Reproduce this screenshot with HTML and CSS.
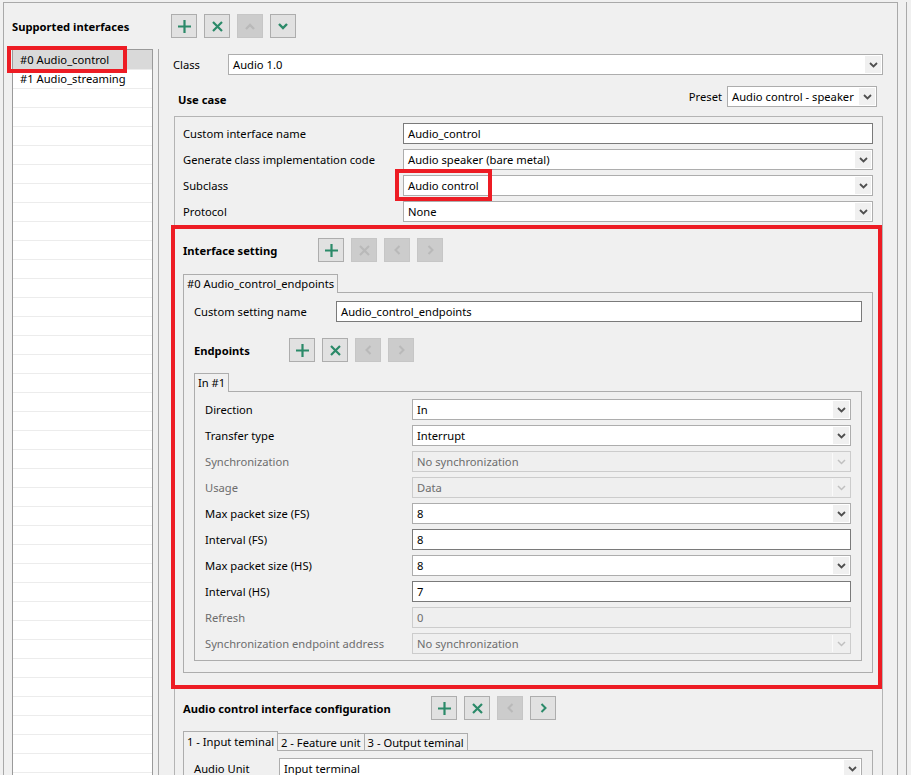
FILE: index.html
```html
<!DOCTYPE html>
<html>
<head>
<meta charset="utf-8">
<link rel="stylesheet" href="styles.css">
</head>
<body>
<div class="app">
  <div class="frame">
    <div class="topbar">
      <div class="title w-top">Supported interfaces</div>
      <div class="btns">
        <div class="btn"><svg width="13" height="13" viewBox="0 0 13 13"><path d="M6.5 0v13M0 6.5h13" stroke="currentColor" stroke-width="2.2"/></svg></div>
        <div class="btn"><svg width="11" height="11" viewBox="0 0 11 11"><path d="M1 1l9 9M10 1l-9 9" stroke="currentColor" stroke-width="2.2"/></svg></div>
        <div class="btn dis"><svg width="10" height="7" viewBox="0 0 10 7"><path d="M1 6l4-4 4 4" stroke="currentColor" stroke-width="2.4" fill="none"/></svg></div>
        <div class="btn"><svg width="10" height="7" viewBox="0 0 10 7"><path d="M1 1l4 4 4-4" stroke="currentColor" stroke-width="2.4" fill="none"/></svg></div>
      </div>
    </div>
    <div class="main">
      <div class="list">
        <div class="item sel">#0 Audio_control</div>
        <div class="item">#1 Audio_streaming</div>
      </div>
      <div class="pane">
        <div class="classrow">
          <div class="lbl-class">Class</div>
          <div class="combo"><span class="val">Audio 1.0</span><span class="arrow"><svg width="9" height="6" viewBox="0 0 9 6"><path d="M1 1l3.5 3.5L8 1" stroke="currentColor" stroke-width="1.8" fill="none"/></svg></span></div>
        </div>
        <div class="usecase-row">
          <div class="title uc-title">Use case</div>
          <div class="preset">
            <span>Preset</span>
            <div class="combo preset-combo"><span class="val">Audio control - speaker</span><span class="arrow"><svg width="9" height="6" viewBox="0 0 9 6"><path d="M1 1l3.5 3.5L8 1" stroke="currentColor" stroke-width="1.8" fill="none"/></svg></span></div>
          </div>
        </div>
        <div class="group">
          <div class="form f-use">
            <div>Custom interface name</div>
            <div class="text"><span class="val">Audio_control</span></div>
            <div>Generate class implementation code</div>
            <div class="combo"><span class="val">Audio speaker (bare metal)</span><span class="arrow"><svg width="9" height="6" viewBox="0 0 9 6"><path d="M1 1l3.5 3.5L8 1" stroke="currentColor" stroke-width="1.8" fill="none"/></svg></span></div>
            <div>Subclass</div>
            <div class="combo"><span class="val">Audio control</span><span class="arrow"><svg width="9" height="6" viewBox="0 0 9 6"><path d="M1 1l3.5 3.5L8 1" stroke="currentColor" stroke-width="1.8" fill="none"/></svg></span></div>
            <div>Protocol</div>
            <div class="combo"><span class="val">None</span><span class="arrow"><svg width="9" height="6" viewBox="0 0 9 6"><path d="M1 1l3.5 3.5L8 1" stroke="currentColor" stroke-width="1.8" fill="none"/></svg></span></div>
          </div>

          <div class="hdr hdr-if">
            <div class="title w-if">Interface setting</div>
            <div class="btns">
              <div class="btn"><svg width="13" height="13" viewBox="0 0 13 13"><path d="M6.5 0v13M0 6.5h13" stroke="currentColor" stroke-width="2.2"/></svg></div>
              <div class="btn dis"><svg width="11" height="11" viewBox="0 0 11 11"><path d="M1 1l9 9M10 1l-9 9" stroke="currentColor" stroke-width="2.2"/></svg></div>
              <div class="btn dis"><svg width="7" height="10" viewBox="0 0 7 10"><path d="M5.5 1l-4 4 4 4" stroke="currentColor" stroke-width="2" fill="none"/></svg></div>
              <div class="btn dis"><svg width="7" height="10" viewBox="0 0 7 10"><path d="M1.5 1l4 4-4 4" stroke="currentColor" stroke-width="2" fill="none"/></svg></div>
            </div>
          </div>
          <div class="tabs tabs-if">
            <div class="tab on">#0 Audio_control_endpoints</div>
          </div>
          <div class="panel panel-if">
            <div class="form f-set">
              <div>Custom setting name</div>
              <div class="text"><span class="val">Audio_control_endpoints</span></div>
            </div>
            <div class="hdr hdr-ep">
              <div class="title w-ep">Endpoints</div>
              <div class="btns">
                <div class="btn"><svg width="13" height="13" viewBox="0 0 13 13"><path d="M6.5 0v13M0 6.5h13" stroke="currentColor" stroke-width="2.2"/></svg></div>
                <div class="btn"><svg width="11" height="11" viewBox="0 0 11 11"><path d="M1 1l9 9M10 1l-9 9" stroke="currentColor" stroke-width="2.2"/></svg></div>
                <div class="btn dis"><svg width="7" height="10" viewBox="0 0 7 10"><path d="M5.5 1l-4 4 4 4" stroke="currentColor" stroke-width="2" fill="none"/></svg></div>
                <div class="btn dis"><svg width="7" height="10" viewBox="0 0 7 10"><path d="M1.5 1l4 4-4 4" stroke="currentColor" stroke-width="2" fill="none"/></svg></div>
              </div>
            </div>
            <div class="tabs tabs-ep">
              <div class="tab on">In #1</div>
            </div>
            <div class="panel panel-ep">
              <div class="form f-ep">
                <div>Direction</div>
                <div class="combo"><span class="val">In</span><span class="arrow"><svg width="9" height="6" viewBox="0 0 9 6"><path d="M1 1l3.5 3.5L8 1" stroke="currentColor" stroke-width="1.8" fill="none"/></svg></span></div>
                <div>Transfer type</div>
                <div class="combo"><span class="val">Interrupt</span><span class="arrow"><svg width="9" height="6" viewBox="0 0 9 6"><path d="M1 1l3.5 3.5L8 1" stroke="currentColor" stroke-width="1.8" fill="none"/></svg></span></div>
                <div class="dlbl">Synchronization</div>
                <div class="combo off"><span class="val">No synchronization</span><span class="arrow"><svg width="9" height="6" viewBox="0 0 9 6"><path d="M1 1l3.5 3.5L8 1" stroke="currentColor" stroke-width="1.5" fill="none"/></svg></span></div>
                <div class="dlbl">Usage</div>
                <div class="combo off"><span class="val">Data</span><span class="arrow"><svg width="9" height="6" viewBox="0 0 9 6"><path d="M1 1l3.5 3.5L8 1" stroke="currentColor" stroke-width="1.5" fill="none"/></svg></span></div>
                <div>Max packet size (FS)</div>
                <div class="combo"><span class="val">8</span><span class="arrow"><svg width="9" height="6" viewBox="0 0 9 6"><path d="M1 1l3.5 3.5L8 1" stroke="currentColor" stroke-width="1.8" fill="none"/></svg></span></div>
                <div>Interval (FS)</div>
                <div class="text"><span class="val">8</span></div>
                <div>Max packet size (HS)</div>
                <div class="combo"><span class="val">8</span><span class="arrow"><svg width="9" height="6" viewBox="0 0 9 6"><path d="M1 1l3.5 3.5L8 1" stroke="currentColor" stroke-width="1.8" fill="none"/></svg></span></div>
                <div>Interval (HS)</div>
                <div class="text"><span class="val">7</span></div>
                <div class="dlbl">Refresh</div>
                <div class="text off"><span class="val">0</span></div>
                <div class="dlbl">Synchronization endpoint address</div>
                <div class="combo off"><span class="val">No synchronization</span><span class="arrow"><svg width="9" height="6" viewBox="0 0 9 6"><path d="M1 1l3.5 3.5L8 1" stroke="currentColor" stroke-width="1.5" fill="none"/></svg></span></div>
              </div>
            </div>
          </div>

          <div class="hdr hdr-ac">
            <div class="title w-ac">Audio control interface configuration</div>
            <div class="btns">
              <div class="btn"><svg width="13" height="13" viewBox="0 0 13 13"><path d="M6.5 0v13M0 6.5h13" stroke="currentColor" stroke-width="2.2"/></svg></div>
              <div class="btn"><svg width="11" height="11" viewBox="0 0 11 11"><path d="M1 1l9 9M10 1l-9 9" stroke="currentColor" stroke-width="2.2"/></svg></div>
              <div class="btn dis"><svg width="7" height="10" viewBox="0 0 7 10"><path d="M5.5 1l-4 4 4 4" stroke="currentColor" stroke-width="2" fill="none"/></svg></div>
              <div class="btn"><svg width="7" height="10" viewBox="0 0 7 10"><path d="M1.5 1l4 4-4 4" stroke="currentColor" stroke-width="2" fill="none"/></svg></div>
            </div>
          </div>
          <div class="tabs tabs-ac">
            <div class="tab on">1 - Input teminal</div>
            <div class="tab">2 - Feature unit</div>
            <div class="tab">3 - Output teminal</div>
          </div>
          <div class="panel panel-ac">
            <div class="form f-ac">
              <div>Audio Unit</div>
              <div class="combo"><span class="val">Input terminal</span><span class="arrow"><svg width="9" height="6" viewBox="0 0 9 6"><path d="M1 1l3.5 3.5L8 1" stroke="currentColor" stroke-width="1.8" fill="none"/></svg></span></div>
            </div>
          </div>
        </div>
      </div>
    </div>
  </div>
  <div class="rline"></div>
</div>
<div class="mark mark-list"></div>
<div class="mark mark-sub"></div>
<div class="mark mark-if"></div>
</body>
</html>
```
FILE: styles.css
```css
html, body {
  margin: 0;
  padding: 0;
}
body {
  width: 911px;
  height: 775px;
  overflow: hidden;
  position: relative;
  background: #f0f0f0;
  font-family: "Noto Sans", "Open Sans", sans-serif;
  font-size: 11.2px;
  color: #000;
}
.app {
  display: flex;
  height: 775px;
  padding: 2px 0 0 3px;
  box-sizing: border-box;
}
.frame {
  width: 895px;
  height: 773px;
  box-sizing: border-box;
  border: 1px solid #a9a9a9;
  border-bottom: none;
  display: flex;
  flex-direction: column;
  overflow: hidden;
}
.rline {
  margin-left: 8px;
  width: 0;
  border-left: 1px solid #a9a9a9;
}
.topbar {
  display: flex;
  align-items: center;
  padding: 11px 0 0 8px;
  height: 24px;
}
.title {
  font-weight: bold;
  white-space: nowrap;
}
.w-top { width: 159px; }
.w-if { width: 135px; }
.w-ep { width: 95px; }
.w-ac { width: 248px; }
.btns {
  display: flex;
  gap: 7px;
}
.btn {
  width: 26px;
  height: 24px;
  box-sizing: border-box;
  border: 1px solid #adadad;
  background: #e1e1e1;
  display: flex;
  align-items: center;
  justify-content: center;
  color: #2b8a69;
}
.btn.dis {
  background: #cccccc;
  border-color: #c6c6c6;
  color: #b9b9b9;
}
.main {
  display: flex;
  margin-top: 11px;
  padding-left: 8px;
  flex: 1;
  min-height: 0;
  overflow: hidden;
}
.list {
  width: 141px;
  box-sizing: border-box;
  border: 1px solid #9a9a9a;
  border-bottom: none;
  background-color: #fff;
  background-image: repeating-linear-gradient(to bottom, #ececec 0, #ececec 1px, transparent 1px, transparent 19px);
  background-position: 0 19px;
}
.item {
  height: 19px;
  line-height: 19px;
  padding-left: 7px;
  white-space: nowrap;
}
.item.sel {
  background: #d9d9d9;
}
.pane {
  flex: 1;
  margin-left: 5px;
  border-left: 1px solid #a9a9a9;
  padding: 5px 14px 0 14px;
  min-width: 0;
  overflow: hidden;
}
.classrow {
  display: flex;
  align-items: center;
}
.lbl-class { width: 55px; }
.classrow .combo { flex: 1; }
.combo, .text {
  height: 21px;
  box-sizing: border-box;
  display: flex;
  align-items: center;
  background: #fff;
  white-space: nowrap;
}
.combo {
  border: 1px solid #adadad;
}
.text {
  border: 1px solid #7a7a7a;
}
.val {
  flex: 1;
  padding-left: 4px;
  overflow: hidden;
}
.arrow {
  width: 16px;
  height: 17px;
  margin: 1px;
  background: #f0f0f0;
  display: flex;
  align-items: center;
  justify-content: center;
  color: #4f4f4f;
}
.combo.off {
  background: #efefef;
  border-color: #cccccc;
  color: #6d6d6d;
}
.combo.off .arrow {
  background: #efefef;
  border-left: 1px solid #fafafa;
  color: #c0c0c0;
}
.text.off {
  background: #efefef;
  border-color: #cccccc;
  color: #6d6d6d;
}
.dlbl {
  color: #6d6d6d;
}
.usecase-row {
  display: flex;
  align-items: center;
  justify-content: space-between;
  height: 21px;
  margin-top: 11px;
  padding: 0 6px 0 5px;
}
.uc-title {
  padding-top: 5px;
}
.preset {
  display: flex;
  align-items: center;
  gap: 5px;
}
.preset-combo { width: 150px; }
.group {
  margin-top: 9px;
  margin-left: 1px;
  border: 1px solid #b4b4b4;
  border-bottom: none;
  padding: 6px 9px 0 8px;
  height: 700px;
}
.form {
  display: grid;
  grid-auto-rows: 21px;
  row-gap: 5px;
  align-items: center;
}
.form > div { white-space: nowrap; }
.f-use { grid-template-columns: 220px 1fr; }
.f-set { grid-template-columns: 142px 1fr; }
.f-ep { grid-template-columns: 207px 1fr; }
.f-ac { grid-template-columns: 85px 1fr; }
.hdr {
  display: flex;
  align-items: center;
  height: 24px;
}
.hdr-if { margin-top: 16px; }
.hdr-ep { margin-top: 16px; }
.hdr-ac { margin-top: 23px; }
.tabs {
  display: flex;
  align-items: flex-end;
  position: relative;
  z-index: 1;
  margin-bottom: -1px;
}
.tabs-if { margin-top: 12px; }
.tabs-ep { margin-top: 11px; }
.tabs-ac { margin-top: 11px; }
.tab {
  height: 19px;
  box-sizing: border-box;
  border: 1px solid #adadad;
  border-bottom: none;
  padding: 0 3px;
  line-height: 17px;
  background: #f0f0f0;
  white-space: nowrap;
}
.tabs-ac .tab { height: 18px; border-bottom: 1px solid #adadad; margin-left: -1px; }
.tabs-ac .tab.on { height: 20px; border-bottom: none; margin-left: 0; line-height: 19px; }
.panel {
  border: 1px solid #adadad;
}
.panel-if { padding: 8px 10px 11px 10px; }
.panel-ep { padding: 7px 10px 6px 10px; }
.panel-ac { padding: 7px 10px 0 10px; border-bottom: none; height: 40px; }
.mark {
  position: absolute;
  border: 4px solid #ed1c24;
  box-sizing: border-box;
}
.mark-list { left: 7px; top: 46px; width: 120px; height: 27px; }
.mark-sub { left: 395px; top: 169px; width: 97px; height: 32px; }
.mark-if { left: 171px; top: 225px; width: 711px; height: 464px; }
```
